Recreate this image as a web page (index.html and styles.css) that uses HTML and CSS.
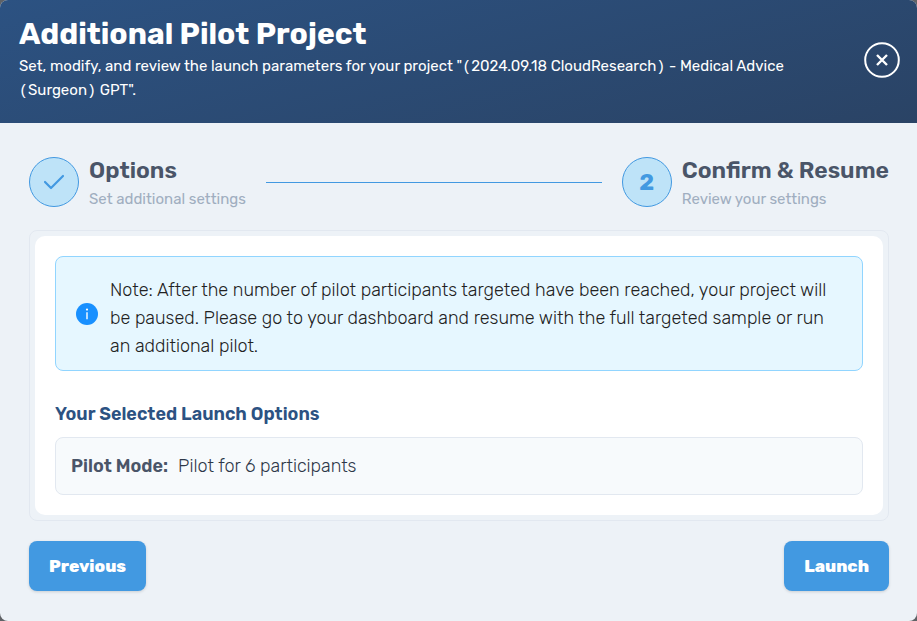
FILE: index.html
```html
<!DOCTYPE html>
<html lang="en">
<head>
  <meta charset="UTF-8">
  <meta name="viewport" content="width=device-width, initial-scale=1.0">
  <title>Additional Pilot Project</title>
  <link rel="stylesheet" href="styles.css">
</head>
<body>
  <div class="modal">
    <header class="modal-header">
      <div class="header-text">
        <h1>Additional Pilot Project</h1>
        <p>Set, modify, and review the launch parameters for your project "<span class="paren">(</span>2024.09.18 CloudResearch<span class="paren">)</span> - Medical Advice <span class="paren">(</span>Surgeon<span class="paren">)</span> GPT".</p>
      </div>
      <button class="close-button" type="button" aria-label="Close">
        <svg width="36" height="36" viewBox="0 0 36 36" fill="none" stroke="#fff">
          <circle cx="18" cy="18" r="16.8" stroke-width="2"/>
          <path d="M13 13l10 10M23 13l-10 10" stroke-width="2.4"/>
        </svg>
      </button>
    </header>

    <main class="modal-body">
      <div class="steps">
        <div class="step">
          <div class="step-icon">
            <svg width="22" height="16" viewBox="0 0 22 16" fill="none" stroke="#4299e1" stroke-width="2.2" stroke-linecap="round" stroke-linejoin="round">
              <path d="M2 8l6 6L20 2"/>
            </svg>
          </div>
          <div>
            <div class="step-title">Options</div>
            <div class="step-desc">Set additional settings</div>
          </div>
        </div>
        <div class="step-line"></div>
        <div class="step">
          <div class="step-icon">2</div>
          <div>
            <div class="step-title">Confirm &amp; Resume</div>
            <div class="step-desc">Review your settings</div>
          </div>
        </div>
      </div>

      <div class="panel">
        <div class="card">
          <div class="note">
            <svg class="note-icon" width="22" height="22" viewBox="0 0 22 22">
              <circle cx="11" cy="11" r="11" fill="#1890ff"/>
              <circle cx="11" cy="6.6" r="1.1" fill="#fff"/>
              <path d="M11 9.3v7" stroke="#fff" stroke-width="1.4"/>
            </svg>
            <p>Note: After the number of pilot participants targeted have been reached, your project will be paused. Please go to your dashboard and resume with the full targeted sample or run an additional pilot.</p>
          </div>
          <h2>Your Selected Launch Options</h2>
          <div class="option">
            <span class="option-name">Pilot Mode:</span>
            <span>Pilot for 6 participants</span>
          </div>
        </div>
      </div>

      <div class="buttons">
        <button class="main-button" type="button">Previous</button>
        <button class="main-button" type="button">Launch</button>
      </div>
    </main>
  </div>
</body>
</html>
```
FILE: styles.css
```css
* {
  box-sizing: border-box;
}

body {
  margin: 0;
  background-color: #5f6266;
  font-family: Rubik, Roboto, sans-serif;
  font-size: 18px;
}

h1, h2, p {
  margin: 0;
}

.modal {
  display: flex;
  flex-direction: column;
  min-height: 100vh;
  border-radius: 8px;
  overflow: hidden;
  background-color: #edf2f7;
}

.modal-header {
  display: flex;
  align-items: center;
  justify-content: space-between;
  gap: 64px;
  padding: 14px 17px 17px 19px;
  color: #fff;
  background: linear-gradient(165deg, #2c5282, #2a4365);
}

.modal-header h1 {
  font-size: 30px;
  line-height: 40px;
  font-weight: 700;
}

.modal-header p {
  padding-bottom: 4px;
  font-size: 15px;
  line-height: 24px;
}

.paren {
  font-family: "Liberation Mono", monospace;
  line-height: 1;
}

.close-button {
  flex: none;
  padding: 0;
  border: 0;
  background: none;
  cursor: pointer;
}

.close-button svg {
  display: block;
}

.modal-body {
  padding: 30px 28px 30px 29px;
}

.steps {
  display: flex;
  align-items: center;
  gap: 20px;
  padding-bottom: 19px;
}

.step {
  display: flex;
  align-items: center;
  gap: 10px;
}

.step-icon {
  display: flex;
  align-items: center;
  justify-content: center;
  width: 50px;
  height: 50px;
  border: 1px solid #4299e1;
  border-radius: 50%;
  background-color: #bee3f8;
  color: #4299e1;
  font-size: 23px;
  font-weight: 700;
}

.step-title {
  font-size: 23px;
  line-height: 34px;
  font-weight: 600;
  color: #4a5568;
}

.step-desc {
  font-size: 15px;
  line-height: 24px;
  color: #a0aec0;
}

.step-line {
  flex: 1;
  height: 1px;
  background-color: #4299e1;
}

.panel {
  padding: 5px;
  border: 1px solid #e2e8f0;
  border-radius: 8px;
}

.card {
  padding: 20px;
  border-radius: 10px;
  background-color: #fff;
}

.note {
  display: flex;
  align-items: center;
  gap: 12px;
  padding: 11px 20px 10px;
  border: 1px solid #91d5ff;
  border-radius: 8px;
  background-color: #e6f7ff;
  color: #222;
}

.note p {
  padding-top: 8px;
  font-weight: 320;
  line-height: 28px;
}

.note-icon {
  flex: none;
}

.card h2 {
  padding: 29px 0 9px;
  font-size: 18px;
  line-height: 28px;
  font-weight: 600;
  color: #2c5282;
}

.option {
  display: flex;
  gap: 10px;
  padding: 14px 15px;
  border: 1px solid #e2e8f0;
  border-radius: 8px;
  background-color: #f7fafc;
  line-height: 28px;
  font-weight: 320;
  color: #2d3748;
}

.option-name {
  font-weight: 600;
  color: #4a5568;
}

.buttons {
  display: flex;
  justify-content: space-between;
  padding-top: 20px;
}

.main-button {
  height: 50px;
  padding: 0 20px;
  border: 0;
  border-radius: 8px;
  background-color: #4299e1;
  box-shadow: 0 1px 3px rgba(0, 0, 0, 0.15);
  color: #fff;
  font-family: inherit;
  font-size: 17px;
  font-weight: 800;
  cursor: pointer;
}
```
